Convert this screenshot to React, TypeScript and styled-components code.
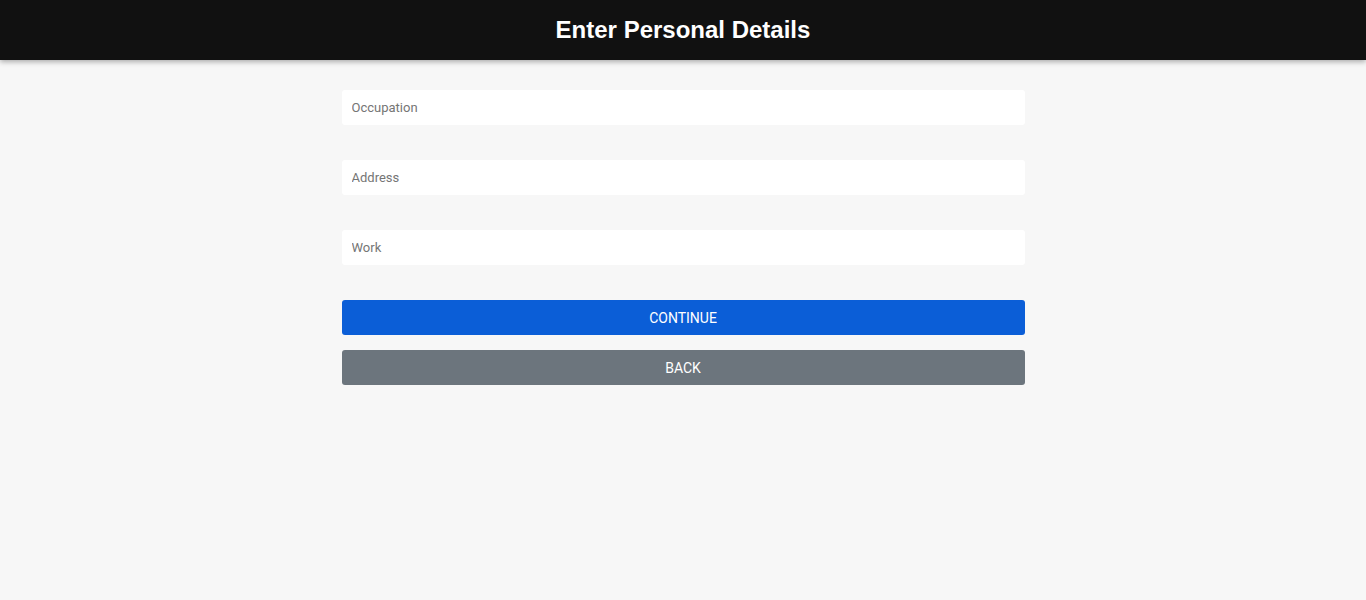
import * as React from 'react';
import styled, { createGlobalStyle } from 'styled-components';

const GlobalStyle = createGlobalStyle`
  html, body {
    margin: 0;
    padding: 0;
    background: #f7f7f7;
    font-family: "Liberation Sans", Arial, sans-serif;
  }
`;

const Header = styled.header`
  height: 60px;
  background: #111111;
  display: flex;
  align-items: center;
  justify-content: center;
  box-shadow: 0 2px 5px rgba(0, 0, 0, 0.3);
`;

const Title = styled.h1`
  margin: 0;
  color: #ffffff;
  font-size: 24px;
  font-weight: 700;
`;

const Form = styled.form`
  width: 50%;
  margin: 30px auto 0;
  display: flex;
  flex-direction: column;
`;

const Input = styled.input`
  box-sizing: border-box;
  height: 35px;
  width: 100%;
  margin-bottom: 35px;
  padding: 0 10px;
  border: none;
  border-radius: 3px;
  background: #ffffff;
  font-family: Roboto, "Liberation Sans", Arial, sans-serif;
  font-size: 13px;
  color: #333;
  outline: none;

  &::placeholder {
    color: #757575;
  }
`;

const Button = styled.button<{ variant: 'primary' | 'secondary' }>`
  height: 35px;
  width: 100%;
  margin-bottom: 15px;
  border: none;
  border-radius: 3px;
  background: ${({ variant }) => (variant === 'primary' ? '#0b5ed7' : '#6c757d')};
  color: #ffffff;
  font-family: Roboto, "Liberation Sans", Arial, sans-serif;
  font-size: 14px;
  text-transform: uppercase;
  cursor: pointer;
`;

export default function App() {
  return (
    <>
      <GlobalStyle />
      <Header>
        <Title>Enter Personal Details</Title>
      </Header>
      <Form onSubmit={(e) => e.preventDefault()}>
        <Input placeholder="Occupation" />
        <Input placeholder="Address" />
        <Input placeholder="Work" />
        <Button variant="primary" type="submit">Continue</Button>
        <Button variant="secondary" type="button">Back</Button>
      </Form>
    </>
  );
}
